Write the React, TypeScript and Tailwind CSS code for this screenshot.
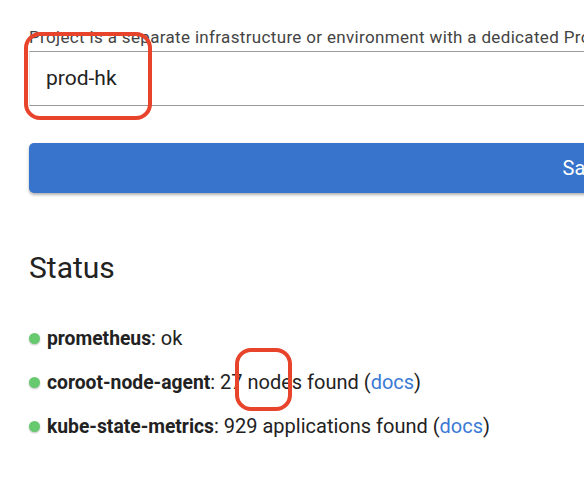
const items = [
  { name: 'prometheus', text: ': ok', docs: false },
  { name: 'coroot-node-agent', text: ': 27 nodes found (', docs: true },
  { name: 'kube-state-metrics', text: ': 929 applications found (', docs: true },
];

export default function App() {
  return (
    <div className="relative h-[496px] w-[584px] overflow-hidden bg-white font-['Roboto',sans-serif] text-[#222]">
      <div className="w-[1139px] pl-[29px] pt-[27px]">
        <p className="whitespace-nowrap text-[17px] leading-[20px] tracking-[0.02em] text-[#444]">
          Project is a separate infrastructure or environment with a dedicated Prometheus server.
        </p>
        <div className="mt-[4px] flex h-[55px] items-center border-y-[1.5px] border-l border-y-[#9a9a9a] border-l-[#e4e4e4] pl-[16px]">
          <span className="text-[21px] text-[#222]">prod-hk</span>
        </div>
        <button className="mt-[37px] h-[50px] w-full rounded-[5px] bg-[#3874cb] text-[20px] text-white shadow-[0_2px_3px_rgba(0,0,0,0.3)]">
          Save
        </button>
        <h2 className="mt-[57px] text-[30px] leading-[36px] text-[#222]">Status</h2>
        <ul className="mt-[30px]">
          {items.map((item) => (
            <li key={item.name} className="flex h-[44px] items-center gap-[7px] text-[20px]">
              <span className="h-[11px] w-[11px] rounded-full bg-[#66c96e] shadow-[0_1px_2px_rgba(0,0,0,0.25)]" />
              <span>
                <span className="text-[19.3px] font-bold">{item.name}</span>
                {item.text}
                {item.docs && (
                  <>
                    <a className="text-[#3b7bd4]">docs</a>)
                  </>
                )}
              </span>
            </li>
          ))}
        </ul>
      </div>
      <div className="absolute left-[24px] top-[32px] h-[88px] w-[128px] rounded-[16px] border-[4px] border-[#e8432b]" />
      <div className="absolute left-[235px] top-[348px] h-[63px] w-[57px] rounded-[16px] border-[4px] border-[#e8432b]" />
    </div>
  );
}
